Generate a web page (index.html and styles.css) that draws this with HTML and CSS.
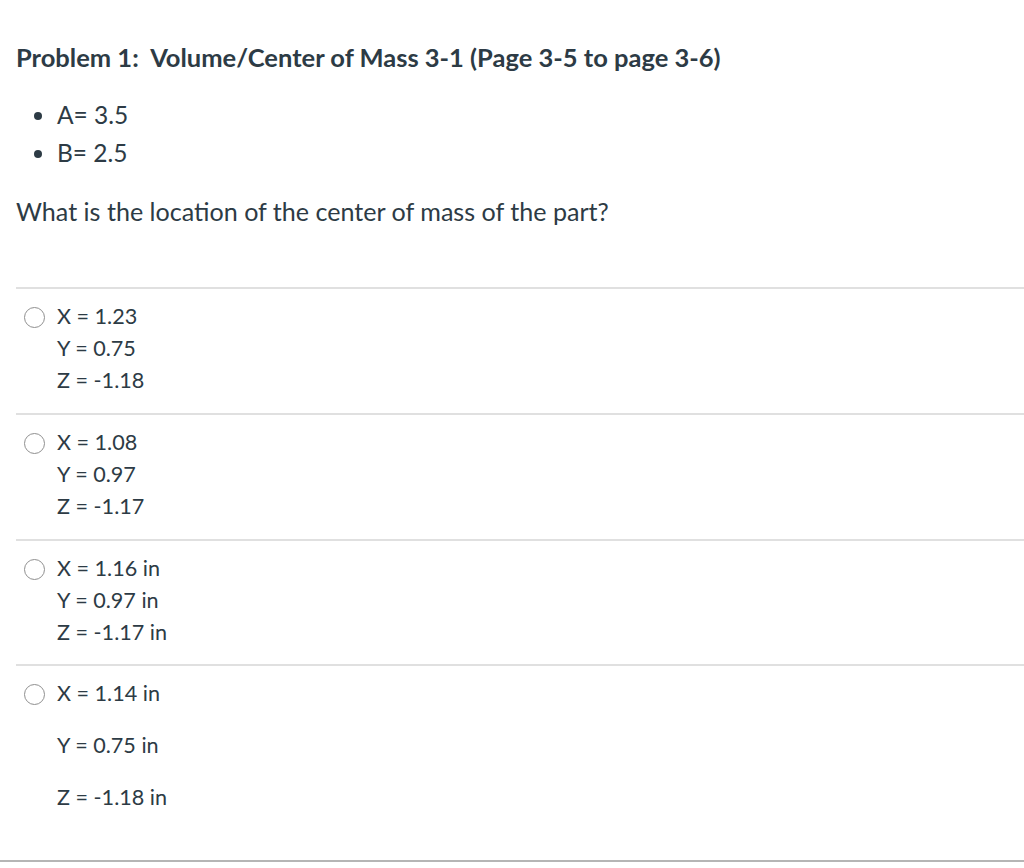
FILE: index.html
```html
<!DOCTYPE html>
<html>
<head>
<meta charset="utf-8">
<link rel="stylesheet" href="styles.css">
</head>
<body>
<div class="question">
  <div class="text">
    <p class="title"><strong>Problem 1:&nbsp; Volume/Center of Mass 3-1 (Page 3-5 to page 3-6)</strong></p>
    <ul class="params">
      <li>A= 3.5</li>
      <li>B= 2.5</li>
    </ul>
    <p class="prompt">What is the location of the center of mass of the part?</p>
  </div>
  <div class="answers">
    <div class="answer">
      <span class="radio"></span>
      <div class="label">X = 1.23<br>Y = 0.75<br>Z = -1.18</div>
    </div>
    <div class="answer">
      <span class="radio"></span>
      <div class="label">X = 1.08<br>Y = 0.97<br>Z = -1.17</div>
    </div>
    <div class="answer">
      <span class="radio"></span>
      <div class="label">X = 1.16 in<br>Y = 0.97 in<br>Z = -1.17 in</div>
    </div>
    <div class="answer last">
      <span class="radio"></span>
      <div class="label paras"><p>X = 1.14 in</p><p>Y = 0.75 in</p><p>Z = -1.18 in</p></div>
    </div>
  </div>
</div>
</body>
</html>
```

FILE: styles.css
```css
html, body {
  margin: 0;
  padding: 0;
  background: #fff;
}
body {
  font-family: Lato, "Liberation Sans", sans-serif;
  color: #2d3b45;
  width: 1024px;
  height: 868px;
  overflow: hidden;
}
.question {
  border-bottom: 2px solid #b5b5b5;
  height: 862px;
  box-sizing: border-box;
}
.text {
  padding: 40px 16px 0 16px;
  height: 287px;
  box-sizing: border-box;
}
.text p {
  margin: 0;
}
.title {
  font-size: 25.5px;
  line-height: 34px;
}
.params {
  margin: 22px 0 0 0;
  padding-left: 41px;
  font-size: 24.5px;
  line-height: 38px;
}
.prompt {
  margin-top: 20px !important;
  font-size: 25.1px;
  line-height: 38px;
}
.answers {
  margin-left: 16px;
}
.answer {
  border-top: 2px solid #e0e0e0;
  display: flex;
  align-items: flex-start;
  padding: 11px 0 14px 8px;
  height: 126px;
  box-sizing: border-box;
}
.answer:nth-child(3) {
  height: 125px;
}
.answer.last {
  height: auto;
}
.radio {
  width: 21px;
  height: 21px;
  border: 1px solid #8f8f8f;
  border-radius: 50%;
  margin-top: 7px;
  margin-right: 12px;
  flex: none;
  box-sizing: border-box;
}
.label {
  font-size: 21.6px;
  line-height: 32px;
}
.label.paras p {
  margin: 0 0 20px 0;
}
```
